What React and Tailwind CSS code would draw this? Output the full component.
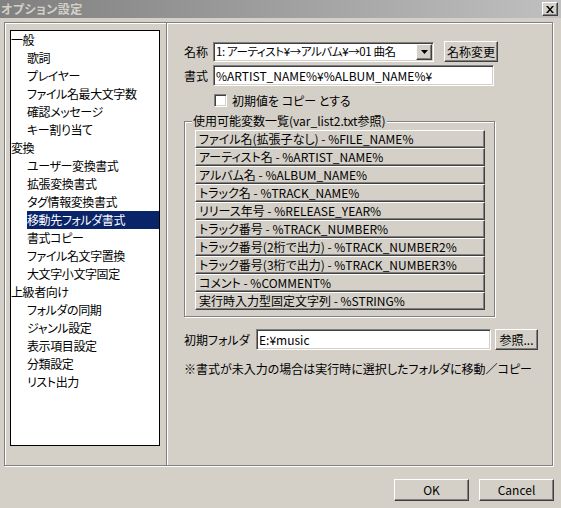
import React from "react";

const treeItems = [
  { label: "一般", child: false },
  { label: "歌詞", child: true },
  { label: "プレイヤー", child: true },
  { label: "ファイル名最大文字数", child: true },
  { label: "確認メッセージ", child: true },
  { label: "キー割り当て", child: true },
  { label: "変換", child: false },
  { label: "ユーザー変換書式", child: true },
  { label: "拡張変換書式", child: true },
  { label: "タグ情報変換書式", child: true },
  { label: "移動先フォルダ書式", child: true, selected: true },
  { label: "書式コピー", child: true },
  { label: "ファイル名文字置換", child: true },
  { label: "大文字小文字固定", child: true },
  { label: "上級者向け", child: false },
  { label: "フォルダの同期", child: true },
  { label: "ジャンル設定", child: true },
  { label: "表示項目設定", child: true },
  { label: "分類設定", child: true },
  { label: "リスト出力", child: true },
];

const variables = [
  "ファイル名(拡張子なし) - %FILE_NAME%",
  "アーティスト名 - %ARTIST_NAME%",
  "アルバム名 - %ALBUM_NAME%",
  "トラック名 - %TRACK_NAME%",
  "リリース年号 - %RELEASE_YEAR%",
  "トラック番号 - %TRACK_NUMBER%",
  "トラック番号(2桁で出力) - %TRACK_NUMBER2%",
  "トラック番号(3桁で出力) - %TRACK_NUMBER3%",
  "コメント - %COMMENT%",
  "実行時入力型固定文字列 - %STRING%",
];

// classic 3D button / sunken field edges
const raised =
  "bg-[#d4d0c8] border border-t-white border-l-white border-r-[#404040] border-b-[#404040] shadow-[inset_-1px_-1px_0_#808080]";
const sunken =
  "bg-white border border-t-[#808080] border-l-[#808080] border-r-white border-b-white shadow-[inset_1px_1px_0_#404040,inset_-1px_-1px_0_#d4d0c8]";
const etched = "border border-[#808080] shadow-[inset_1px_1px_0_#fff,1px_1px_0_#fff]";

const App = () => {
  return (
    <div className="w-[561px] h-[508px] bg-[#d4d0c8] overflow-hidden flex flex-col text-[12px] leading-none text-black font-['Noto_Sans_CJK_JP','Noto_Sans_CJK_SC',sans-serif] [font-feature-settings:'palt']">
      {/* title bar */}
      <div className="h-[18px] flex items-center justify-between bg-linear-to-r from-[#808080] to-[#c0c0c0]">
        <span className="pl-[1px] font-bold text-[#d4d0c8] text-[12px] tracking-[0.5px]">オプション設定</span>
        <div className={`${raised} w-[16px] h-[14px] mr-[3px] flex items-center justify-center`}>
          <svg width="8" height="7" viewBox="0 0 8 7">
            <path d="M0 0h2l2 2.5L6 0h2L5 3.5 8 7H6L4 4.5 2 7H0l3-3.5z" fill="#000" />
          </svg>
        </div>
      </div>

      {/* main frame */}
      <div className={`${etched} mt-[4px] ml-[4px] w-[549px] h-[444px] flex`}>
        <div className="w-[162px] border-r border-[#808080] pl-[5px] pt-[7px]">
          <div className="w-[150px] h-[416px] border border-black bg-white">
            {treeItems.map((item) => (
              <div key={item.label} className="h-[18px] flex items-center">
                <span
                  className={`${item.child ? "ml-[16px]" : ""} ${
                    item.selected ? "flex-1 bg-[#0a246a] text-white" : ""
                  } h-[18px] flex items-center tracking-[-0.4px]`}
                >
                  {item.label}
                </span>
              </div>
            ))}
          </div>
        </div>

        <div className="flex-1 border-l border-white pl-[16px] pt-[18px]">
          {/* 名称 */}
          <div className="flex items-start h-[21px]">
            <span className="w-[29px] h-[21px] flex items-center">名称</span>
            <div className={`${sunken} w-[221px] h-[20px] mt-[1px] flex items-center justify-between p-[1px]`}>
              <span className="pl-[1px] whitespace-nowrap text-[11.5px] tracking-[-0.4px]">
                1: アーティスト¥→アルバム¥→01 曲名
              </span>
              <div className={`${raised} shrink-0 w-[16px] h-[16px] flex items-center justify-center`}>
                <svg width="7" height="4" viewBox="0 0 7 4">
                  <path d="M0 0h7L3.5 4z" fill="#000" />
                </svg>
              </div>
            </div>
            <button className={`${raised} ml-[10px] w-[54px] h-[21px] flex items-center justify-center`}>
              名称変更
            </button>
          </div>

          {/* 書式 */}
          <div className="mt-[3px] flex items-center h-[21px]">
            <span className="w-[29px]">書式</span>
            <div className={`${sunken} w-[281px] h-[21px] flex items-center pl-[2px]`}>
              %ARTIST_NAME%¥%ALBUM_NAME%¥
            </div>
          </div>

          <div className="mt-[8px] pl-[30px] flex items-center h-[13px]">
            <div className={`${sunken} w-[13px] h-[13px]`} />
            <span className="ml-[5px]">初期値を コピー とする</span>
          </div>

          {/* variable list group */}
          <div className={`${etched} relative mt-[14px] w-[311px] h-[196px] pt-[8px] pl-[10px]`}>
            <span className="absolute left-[7px] -top-[7px] px-[1px] bg-[#d4d0c8]">
              使用可能変数一覧(var_list2.txt参照)
            </span>
            {variables.map((v) => (
              <div key={v} className={`${raised} w-[290px] h-[18px] flex items-center pl-[3px] whitespace-nowrap`}>
                {v}
              </div>
            ))}
          </div>

          <div className="mt-[12px] flex items-center h-[21px]">
            <span className="w-[72px]">初期フォルダ</span>
            <div className={`${sunken} w-[235px] h-[21px] flex items-center pl-[2px]`}>E:¥music</div>
            <button className={`${raised} ml-[4px] w-[43px] h-[21px] flex items-center justify-center`}>
              参照...
            </button>
          </div>

          <div className="mt-[12px] h-[14px] flex items-center">
            ※書式が未入力の場合は実行時に選択したフォルダに移動／コピー
          </div>
        </div>
      </div>

      {/* dialog buttons */}
      <div className="mt-[13px] flex justify-end gap-[10px] pr-[7px]">
        <button className={`${raised} w-[75px] h-[22px] flex items-center justify-center`}>OK</button>
        <button className={`${raised} w-[75px] h-[22px] flex items-center justify-center`}>Cancel</button>
      </div>
    </div>
  );
};

export default App;
